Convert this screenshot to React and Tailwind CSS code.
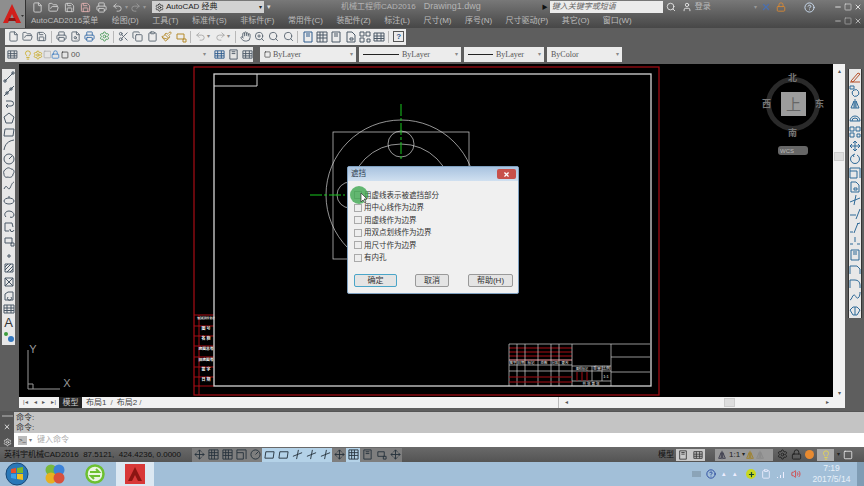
import { Copy, Clipboard, File, FileSearch, FolderOpen, Hand, HelpCircle, Minus, Paintbrush, Printer, Redo2, Save, Scissors, Search, Settings, Square, Undo2, User, X, ZoomIn, Lock, Lightbulb, Volume2, Plus } from 'lucide-react'

// 12x12 strokes for the AutoCAD tools that the icon pack has no match for
const paths = {
  line: 'M2 10L10 2M1 9h2v2H1zM9 1h2v2H9z',
  xline: 'M1 11L11 1M3 7h2v2H3zM7 3h2v2H7z',
  pline: 'M3 3h5a2 2 0 0 1 0 5H3M3 8l2-2M3 8l2 2',
  polygon: 'M6 1l5 4-2 6H3L1 5z',
  rect: 'M2 3h9l-1 7H1z',
  arc: 'M1 11C2 5 5 2 11 1',
  circle: 'M6 1a5 5 0 1 0 0 10A5 5 0 1 0 6 1zM6 6l3-3',
  cloud: 'M3 2c2-2 4-1 5 0 3 0 4 3 2 5 0 3-3 4-5 3-3 1-4-1-4-3-1-2 0-4 2-5z',
  spline: 'M1 9c3-7 4 3 6-1s2-5 4-6',
  ellipse: 'M1 7a5 3 0 1 0 10 0a5 3 0 1 0-10 0M6 2v2',
  earc: 'M3 9C0 6 3 3 6 3s5 2 5 4-3 3-4 2',
  block: 'M2 2h7l1 4M2 2v8h4M7 8a2 2 0 1 0 4 1M9 11l-2-2',
  insert: 'M2 3h7v5H2zM8 8h3v3H8z',
  point: 'M5 6h2v2H5z',
  hatch: 'M2 2h8v8H2zM2 5l3-3M2 8l6-6M4 10l6-6M7 10l3-3',
  grad: 'M2 2h8v8H2zM2 2l8 8M10 2l-8 8',
  region: 'M2 4l3-2h5v8H2zM5 7a2 2 0 1 0 3 0',
  table: 'M1 2h10v8H1zM1 5h10M1 7.5h10M4 2v8M8 2v8',
  pencil: 'M2 10L9 2l2 1-7 8zM1 11h10',
  copyobj: 'M1 1h4v3H1zM5 5a3 3 0 1 0 3 6 3 3 0 0 0-3-6z',
  mirror: 'M6 1v10M5 3L2 10h3zM7 3l3 7H7z',
  offset: 'M1 9a5 5 0 0 1 10 0zM3 9a3 3 0 0 1 6 0',
  array: 'M1 1h4v4H1zM7 1h4v4H7zM1 7h4v4H1zM8 8h3v3H8z',
  move: 'M6 1v10M1 6h10M6 1L4 3M6 1l2 2M6 11L4 9M6 11l2-2M1 6l2-2M1 6l2 2M11 6L9 4M11 6L9 8',
  rotate: 'M8 2a4.5 4.5 0 1 1-4 0M4 2l2-1M4 2l1 2',
  scale: 'M1 4h7v7H1zM1 1h10v10M1 1v3',
  stretch: 'M2 1h5l3 3v7H2zM5 7h3v2H5z',
  trim: 'M1 8l10-4M7 1L5 11',
  extend: 'M1 7h6M7 11l4-10',
  brk: 'M1 10h3M8 2l3-1M5 11L9 1',
  chamfer: 'M1 3h7l3 3v5M1 3v8',
  fillet: 'M1 3h5c3 0 5 2 5 5v3M1 3v8',
  blend: 'M1 10c2 0 2-5 4-5s2 4 4 3 2-5 2-6',
  explode: 'M1 6l3-3h4l3 3-3 5H4zM6 3v8',
  break: 'M1 9h3M8 9h3M6 2v5',
  sheet: 'M2 1h8v10H2zM4 3h4M4 5h4',
  grid: 'M1 1h10v10H1zM1 4h10M1 7h10M4 1v10M7 1v10',
}

const Ico = ({ n, c = '#4a5866', s = 12 }) => (
  <svg width={s} height={s} viewBox="0 0 12 12" fill="none" stroke={c} strokeWidth="1">
    <path d={paths[n]} />
  </svg>
)

const menus = ['AutoCAD2016菜单', '绘图(D)', '工具(T)', '标准件(S)', '非标件(F)', '常用件(C)', '装配件(Z)', '标注(L)', '尺寸(M)', '序号(N)', '尺寸驱动(P)', '其它(O)', '窗口(W)']
const leftTools = ['line', 'xline', 'pline', 'polygon', 'rect', 'arc', 'circle', 'cloud', 'spline', 'ellipse', 'earc', 'block', 'insert', 'point', 'hatch', 'grad', 'region', 'table']
const rightTools = ['pencil', 'copyobj', 'mirror', 'offset', 'array', 'move', 'rotate', 'scale', 'stretch', 'trim', 'extend', 'brk', 'break', 'sheet', 'chamfer', 'fillet', 'blend', 'explode']
const options = ['用虚线表示被遮挡部分', '用中心线作为边界', '用虚线作为边界', '用双点划线作为边界', '用尺寸作为边界', '有内孔']
const sideLabels = [['借(通)用件登记', 319, 2.6], ['图 号', 330, 4], ['名 称', 340, 4], ['底图总号', 350, 3.8], ['旧底图号', 361, 3.8], ['签 字', 371, 4], ['日 期', 381, 4]]
const statusOn = [false, false, false, false, false, true, true, true, true, true, false, true, false, false, false]

function QuickIcons() {
  return (
    <div className="flex shrink-0 items-center gap-[5px] text-[#d0d0d0]">
      <File size={11} />
      <FolderOpen size={11} />
      <Save size={11} />
      <Save size={11} className="text-[#e0b0b0]" />
      <Printer size={11} />
      <div className="flex items-center gap-[2px] text-[#999]">
        <Undo2 size={11} className="text-[#ccc]" />
        <span className="text-[6px]">▾</span>
        <Redo2 size={11} />
        <span className="text-[6px]">▾</span>
      </div>
    </div>
  )
}

function WindowButtons() {
  return (
    <div className="flex items-center gap-[2px] text-[#ddd]">
      <Minus size={8} strokeWidth={3} />
      <Square size={8} strokeWidth={2} />
      <X size={8} strokeWidth={3} />
    </div>
  )
}

function TitleBar() {
  return (
    <div className="flex h-[28px] bg-gradient-to-b from-[#787878] to-[#474747]">
      <div className="flex h-[28px] w-[26px] shrink-0 items-center justify-center border-r border-[#333] bg-[#8e8e8e]">
        <svg width="22" height="22" viewBox="0 0 22 22">
          <path d="M10 1L1 20h5l4-9 4 9h5z" fill="#d2201c" />
          <path d="M7 15h6l1 3H6z" fill="#8c1512" />
          <path d="M19 12h3l-1.500 2z" fill="#333" />
        </svg>
      </div>
      <div className="flex min-w-0 flex-1 flex-col">
        <div className="flex h-[14px] items-center whitespace-nowrap pl-[6px]">
          <QuickIcons />
          <div className="ml-[6px] flex h-[12px] w-[112px] shrink-0 items-center bg-[#d2d2d2] pl-[3px] text-[8px] text-[#222]">
            <Settings size={9} className="mr-[2px]" />
            AutoCAD 经典
            <span className="ml-auto pr-[2px] text-[6px]">▾</span>
          </div>
          <span className="ml-[3px] text-[7px] text-[#ddd]">▾</span>
          <span className="ml-[70px] shrink-0 text-[8px] text-[#b4b4b4]">机械工程师CAD2016</span>
          <span className="ml-[8px] shrink-0 text-[9px] text-[#b4b4b4]">Drawing1.dwg</span>
          <span className="ml-[61px] text-[6px] text-[#111]">▶</span>
          <div className="ml-[2px] flex h-[12px] w-[113px] shrink-0 items-center bg-[#ececec] pl-[2px] text-[8px] italic text-[#666]">键入关键字或短语</div>
          <Search size={10} className="ml-[3px] shrink-0 text-[#eee]" />
          <User size={10} className="ml-[6px] shrink-0 text-[#eee]" />
          <span className="ml-[3px] shrink-0 text-[8px] text-[#bbb]">登录</span>
          <span className="ml-[43px] text-[6px] text-[#999]">▾</span>
          <X size={10} strokeWidth={3} className="ml-[4px] shrink-0 text-[#4a6fb0]" />
          <Lock size={10} className="ml-[5px] shrink-0 text-[#e08a30]" />
          <HelpCircle size={11} className="ml-[18px] shrink-0 text-[#cfe0f5]" />
          <div className="ml-auto pr-[2px]"><WindowButtons /></div>
        </div>
        <div className="flex h-[14px] items-center">
          <div className="ml-[5px] flex gap-[13.5px] whitespace-nowrap text-[8px] text-[#bdbdbd]">
            {menus.map((m) => <span key={m}>{m}</span>)}
          </div>
          <div className="ml-auto pr-[2px] opacity-70"><WindowButtons /></div>
        </div>
      </div>
    </div>
  )
}

function Sep() {
  return <div className="mx-[2px] h-[12px] w-px bg-[#b8b8b8]" />
}

function Cell({ children }) {
  return <div className="flex w-[15px] justify-center">{children}</div>
}

function StandardBar() {
  return (
    <div className="flex h-[17px] items-center bg-[#5e5e5e] pl-[5px]">
      <div className="flex h-[16px] w-[401px] items-center bg-[#ececec] pl-[1px] text-[#5a6672]">
        <Cell><File size={11} /></Cell>
        <Cell><FolderOpen size={11} /></Cell>
        <Cell><Save size={11} /></Cell>
        <Sep />
        <Cell><Printer size={11} /></Cell>
        <Cell><FileSearch size={11} /></Cell>
        <Cell><Printer size={11} className="text-[#3a6ea8]" /></Cell>
        <Cell><Settings size={11} className="text-[#4b9a5a]" /></Cell>
        <Sep />
        <Cell><Scissors size={11} /></Cell>
        <Cell><Copy size={11} /></Cell>
        <Cell><Clipboard size={11} /></Cell>
        <Cell><Paintbrush size={11} className="text-[#b58a2a]" /></Cell>
        <Cell><Ico n="insert" c="#b58a2a" /></Cell>
        <Sep />
        <Cell><Undo2 size={11} className="text-[#aaa]" /></Cell>
        <span className="w-[6px] text-[6px] text-[#888]">▾</span>
        <Cell><Redo2 size={11} className="text-[#aaa]" /></Cell>
        <span className="w-[6px] text-[6px] text-[#888]">▾</span>
        <Sep />
        <Cell><Hand size={11} /></Cell>
        <Cell><ZoomIn size={11} /></Cell>
        <Cell><Search size={11} /></Cell>
        <Cell><Search size={11} /></Cell>
        <Sep />
        <Cell><Ico n="sheet" c="#2c5a8c" /></Cell>
        <Cell><Ico n="grid" /></Cell>
        <Cell><Ico n="sheet" /></Cell>
        <Cell><Ico n="stretch" /></Cell>
        <Cell><Ico n="array" /></Cell>
        <Cell><Ico n="table" /></Cell>
        <Sep />
        <Cell><div className="flex h-[11px] w-[11px] items-center justify-center border border-[#555] text-[8px] font-bold leading-none text-[#2c5a8c]">?</div></Cell>
      </div>
    </div>
  )
}

function Combo({ w, children }) {
  return (
    <div className={`flex h-[15px] items-center bg-[#ececec] pl-[4px] font-['Liberation_Serif',serif] text-[8px] text-[#555] ${w}`}>
      {children}
      <span className="ml-auto pr-[3px] text-[6px] text-[#888]">▾</span>
    </div>
  )
}

function PropertyBar() {
  return (
    <div className="flex h-[19px] items-center bg-[#5e5e5e] pl-[5px]">
      <div className="flex h-[15px] w-[248px] items-center bg-[#e4e4e4] pl-[2px] text-[#555]">
        <Ico n="table" s={11} />
        <Lightbulb size={10} className="ml-[5px] text-[#c8a81c]" />
        <Settings size={10} className="text-[#c8a81c]" />
        <Square size={9} className="text-[#aaa]" />
        <Lock size={9} className="text-[#3478c0]" />
        <Square size={8} className="ml-[1px] text-[#222]" />
        <span className="ml-[2px] text-[8px]">00</span>
        <span className="ml-[123px] text-[6px] text-[#888]">▾</span>
        <div className="ml-[8px] flex gap-[3px]">
          <Ico n="table" c="#2c5a8c" s={11} />
          <Ico n="sheet" s={11} />
          <Ico n="table" s={11} />
        </div>
      </div>
      <div className="ml-[7px] flex gap-[3px]">
        <Combo w="w-[96px]"><Square size={7} className="mr-[2px] text-[#222]" />ByLayer</Combo>
        <Combo w="w-[102px]"><span className="mr-[3px] h-px w-[36px] bg-[#222]" />ByLayer</Combo>
        <Combo w="w-[80px]"><span className="mr-[3px] h-px w-[25px] bg-[#222]" />ByLayer</Combo>
        <Combo w="w-[75px]">ByColor</Combo>
      </div>
    </div>
  )
}

function Drawing() {
  const white = '#d4d4d4'
  const red = '#a80c14'
  const tbV = [517, 525, 538, 551, 559]
  const tbRed = [348, 352, 356, 360]
  return (
    <svg className="absolute inset-0" width="814" height="333" viewBox="19 64 814 333" fill="none">
      <rect x="194" y="67" width="465" height="328" stroke={red} strokeWidth="1.2" />
      <path d="M199 315V395M194 315H214M194 326H214M194 336H214M194 346H214M194 357H214M194 367H214M194 377H214M194 386H214" stroke={red} />
      <rect x="214" y="74" width="437" height="312" stroke={white} strokeWidth="1.3" />
      <path d="M214 86H257V74" stroke={white} />
      <rect x="333" y="132" width="136" height="127" stroke={white} strokeWidth="0.7" />
      <circle cx="401" cy="195" r="75" stroke={white} strokeWidth="0.7" />
      <circle cx="401" cy="195" r="51" stroke={white} strokeWidth="0.7" />
      <circle cx="401" cy="144" r="13" stroke={white} strokeWidth="0.7" />
      <circle cx="350" cy="195" r="13" stroke={white} strokeWidth="0.7" />
      <path d="M401 104V160M310 195H345" stroke="#19c81e" strokeDasharray="12 2 3 2" />
      {sideLabels.map(([t, y, size]) => (
        <text key={t} x="206" y={y} fontSize={size} fill="#f2f2f2" textAnchor="middle" fontWeight="700">{t}</text>
      ))}
      {/* title block */}
      {tbRed.map((y) => <path key={y} d={`M509 ${y}H572`} stroke={red} />)}
      <path d="M509 386V344H650M572 344V386M611 344V386M509 360H572M509 365H572M509 371H611M572 366H611M572 381H611M592 366V381M602 366V381M611 357H650M611 372H650" stroke={white} strokeWidth="0.7" />
      {tbV.map((x) => <path key={x} d={`M${x} 344V386`} stroke={white} strokeWidth="0.7" />)}
      <path d="M577 372V381M582 372V381M587 372V381M509 377H572M509 382H572" stroke={red} />
      {[['签字', 513], ['日期', 521], ['标记', 531], ['处数', 544], ['分区', 555], ['更改', 565]].map(([t, x]) => (
        <text key={x} x={x} y="364" fontSize="3.5" fill="#eee" textAnchor="middle">{t}</text>
      ))}
      <text x="582" y="370" fontSize="3" fill="#eee" textAnchor="middle">图样标记</text>
      <text x="597" y="370" fontSize="4" fill="#eee" textAnchor="middle">重量</text>
      <text x="606" y="370" fontSize="4" fill="#eee" textAnchor="middle">比例</text>
      <text x="606" y="378" fontSize="4" fill="#eee" textAnchor="middle">1:1</text>
      <text x="591" y="385" fontSize="3.5" fill="#eee" textAnchor="middle">共  张  第  张</text>
      {/* ucs icon */}
      <path d="M28 350V389H60M28 384H33V389" stroke="#9a9a9a" />
      <text x="33" y="353" fontSize="11" fill="#9a9a9a" textAnchor="middle" fontFamily="Liberation Sans">Y</text>
      <text x="67" y="387" fontSize="11" fill="#9a9a9a" textAnchor="middle" fontFamily="Liberation Sans">X</text>
    </svg>
  )
}

function ViewCube() {
  return (
    <div className="absolute left-[747px] top-[9px] h-[62px] w-[54px]">
      <div className="absolute inset-x-0 top-[4px] h-[54px] rounded-full border-[5px] border-[#2a2a2a]" />
      <div className="absolute left-[15px] top-[19px] flex h-[24px] w-[25px] items-center justify-center bg-[#9c9c9c] text-[15px] leading-none text-[#666]">上</div>
      <span className="absolute left-[22px] top-0 text-[9px] font-bold leading-[10px] text-[#777]">北</span>
      <span className="absolute bottom-[-3px] left-[22px] text-[9px] font-bold leading-[10px] text-[#777]">南</span>
      <span className="absolute left-[-4px] top-[26px] text-[9px] font-bold leading-[10px] text-[#777]">西</span>
      <span className="absolute left-[49px] top-[26px] text-[9px] font-bold leading-[10px] text-[#777]">东</span>
      <div className="absolute left-[12px] top-[73px] flex h-[9px] w-[30px] items-center rounded-[3px] bg-[#666] pl-[2px] text-[6px] leading-none text-[#bbb]">WCS</div>
    </div>
  )
}

function Dialog() {
  return (
    <div className="absolute left-[328px] top-[102px] flex h-[128px] w-[172px] flex-col rounded-[2px] border border-[#7fa0c0] bg-[#f0f0f0] text-[7.5px] text-[#333]">
      <div className="flex h-[14px] items-center bg-gradient-to-b from-[#a9c3e0] to-[#d0e0f0] pl-[3px] text-[#2c3c4c]">
        遮挡
        <div className="ml-auto mr-[2px] flex h-[10px] w-[19px] items-center justify-center rounded-[2px] bg-[#c8504a] text-white">
          <X size={7} strokeWidth={4} />
        </div>
      </div>
      <div className="flex flex-col pl-[6px] pt-[8px]">
        {options.map((o) => (
          <label key={o} className="flex h-[12.5px] items-center">
            <span className="h-[8px] w-[8px] border border-[#aaa] bg-[#eee]" />
            <span className="ml-[2px] leading-none">{o}</span>
          </label>
        ))}
      </div>
      <div className="mt-[10px] flex pl-[6px] text-[8px]">
        <button className="h-[13px] w-[43px] rounded-[2px] border border-[#4aa5c8] bg-[#e4e4e4] leading-none">确定</button>
        <button className="ml-[18px] h-[13px] w-[34px] rounded-[2px] border border-[#999] bg-[#e4e4e4] leading-none">取消</button>
        <button className="ml-[19px] h-[13px] w-[45px] rounded-[2px] border border-[#999] bg-[#e4e4e4] leading-none">帮助(H)</button>
      </div>
      <div className="absolute left-[2px] top-[19px] h-[18px] w-[18px] rounded-full bg-[#3fa850]/80" />
      <svg className="absolute left-[12px] top-[25px]" width="8" height="12" viewBox="0 0 8 12">
        <path d="M1 1v9l2-2 2 3 1-1-2-3h3z" fill="#fff" stroke="#333" strokeWidth="0.7" />
      </svg>
    </div>
  )
}

function Workspace() {
  return (
    <div className="flex min-h-0 flex-1 bg-[#5e5e5e]">
      <div className="ml-[2px] mr-[4px] w-[13px] pt-[5px]">
        <div className="flex h-[276px] flex-col items-center justify-between bg-[#e8e8e8] py-[2px]">
          {leftTools.map((t, i) => <Ico key={i} n={t} />)}
          <span className="font-['Liberation_Sans',sans-serif] text-[13px] leading-[12px] text-[#333]">A</span>
          <svg width="12" height="12" viewBox="0 0 12 12">
            <circle cx="3" cy="3" r="2" fill="#3c9c3c" />
            <circle cx="8" cy="8" r="3" fill="#3478c0" />
          </svg>
        </div>
      </div>
      <div className="flex min-w-0 flex-1 flex-col">
        <div className="flex min-h-0 flex-1">
          <div className="relative min-w-0 flex-1 bg-black">
            <Drawing />
            <ViewCube />
            <Dialog />
          </div>
          <div className="flex w-[12px] flex-col items-center bg-[#f2f2f2]">
            <span className="mt-[3px] text-[6px] leading-[8px] text-[#555]">▴</span>
            <div className="mt-[77px] h-[9px] w-[10px] border border-[#ccc] bg-[#ddd]" />
            <span className="mt-auto text-[6px] leading-[8px] text-[#555]">▾</span>
          </div>
        </div>
        <div className="flex h-[11px] items-center bg-[#f2f2f2] text-[8px] text-[#444]">
          <div className="flex w-[40px] justify-around pl-[1px] text-[6px] text-[#555]">
            <span>|◂</span><span>◂</span><span>▸</span><span>▸|</span>
          </div>
          <span className="flex h-[11px] w-[23px] items-center justify-center bg-[#222] text-[#ccc]">模型</span>
          <span className="ml-[4px]">布局1</span>
          <span className="mx-[4px] text-[#777]">/</span>
          <span>布局2</span>
          <span className="ml-[2px] text-[#777]">/</span>
          <div className="relative ml-auto flex h-[11px] w-[287px] items-center justify-between border-l border-[#bbb] px-[6px] text-[6px] text-[#555]">
            <span>◂</span>
            <span className="absolute left-[165px] h-[9px] w-[11px] border border-[#ccc] bg-[#ddd]" />
            <span className="mr-[10px]">▸</span>
          </div>
        </div>
      </div>
      <div className="ml-[3px] mr-[2px] w-[14px] pt-[5px]">
        <div className="flex h-[249px] flex-col items-center justify-between border-x border-[#333] bg-[#e8e8e8] py-[2px]">
          {rightTools.map((t, i) => <Ico key={i} n={t} c={i === 0 ? '#b5502a' : '#2f6a98'} />)}
        </div>
      </div>
    </div>
  )
}

function CommandArea() {
  return (
    <div className="mt-[3px] flex h-[36px] border-t border-[#555] bg-[#c4c4c4]">
      <div className="flex w-[14px] flex-col items-center bg-[#555] text-[#e8e8e8]">
        <div className="mt-[3px] h-[2px] w-[11px] bg-[#888]" />
        <X size={8} strokeWidth={3} className="mt-[6px]" />
        <Settings size={9} className="mt-[8px]" />
      </div>
      <div className="flex min-w-0 flex-1 flex-col">
        <div className="flex h-[22px] flex-col justify-center pl-[2px] text-[8px] leading-[10px] text-[#333]">
          <span>命令:</span>
          <span>命令:</span>
        </div>
        <div className="flex h-[14px] items-center bg-white pl-[4px] text-[8px] text-[#aaa]">
          <span className="flex h-[9px] w-[9px] items-center justify-center bg-[#bbb] text-[6px] leading-none text-[#333]">&gt;_</span>
          <span className="ml-[2px] text-[6px] text-[#777]">▾</span>
          <span className="ml-[5px]">键入命令</span>
        </div>
      </div>
    </div>
  )
}

function StatusBar() {
  return (
    <div className="flex h-[15px] items-center bg-gradient-to-b from-[#6a6a6a] to-[#545454] pl-[4px] text-[8px] text-[#111]">
      <span className="w-[188px] whitespace-nowrap">英科宇机械CAD2016 &nbsp;87.5121, &nbsp;424.4236, 0.0000</span>
      <div className="flex h-[14px] items-center bg-[#7e7e7e]">
        {statusOn.map((on, i) => (
          <div key={i} className={`flex h-[14px] w-[14px] items-center justify-center ${on ? 'bg-[#b4d2e8]' : ''}`}>
            <Ico n={['move', 'grid', 'grid', 'scale', 'circle', 'rect', 'rect', 'trim', 'trim', 'trim', 'move', 'grid', 'sheet', 'insert', 'move'][i]} c="#26323c" s={11} />
          </div>
        ))}
      </div>
      <span className="ml-[256px] text-[8px]">模型</span>
      <div className="ml-[2px] flex h-[12px] w-[29px] items-center justify-around bg-[#c8c8c8]">
        <Ico n="sheet" s={10} c="#333" /><Ico n="table" s={10} c="#333" />
      </div>
      <div className="ml-[10px] flex h-[12px] w-[58px] items-center bg-[#999] pl-[2px] text-[#222]">
        <Ico n="mirror" s={10} c="#334" />
        <span className="ml-[2px]">1:1</span>
        <span className="ml-[2px] text-[6px]">▾</span>
        <Ico n="mirror" s={10} c="#a08020" />
        <Ico n="mirror" s={10} c="#888" />
      </div>
      <div className="ml-[4px] flex h-[14px] items-center gap-[3px] text-[#222]">
        <Settings size={11} />
        <Lock size={11} />
        <span className="h-[9px] w-[9px] rounded-full bg-[#e88a30]" />
        <div className="flex h-[12px] w-[17px] items-center justify-center bg-[#aaa]"><Lightbulb size={10} className="text-[#e8d84a]" /></div>
        <span className="text-[6px]">▾</span>
        <Square size={10} className="text-[#e8e8e8]" />
      </div>
    </div>
  )
}

function Taskbar() {
  return (
    <div className="flex h-[24px] items-center bg-[#a2bfd8]">
      <svg className="ml-[5px]" width="24" height="24" viewBox="0 0 24 24">
        <circle cx="12" cy="12" r="11" fill="#2a78b8" stroke="#1a4a78" />
        <path d="M6 7l5-1v5H6z" fill="#e8502a" />
        <path d="M12 6l6-1v6h-6z" fill="#7cb82a" />
        <path d="M6 12h5v5l-5-1z" fill="#3aa0e8" />
        <path d="M12 12h6v6l-6-1z" fill="#f0c020" />
      </svg>
      <svg className="ml-[15px]" width="22" height="22" viewBox="0 0 22 22">
        <circle cx="7" cy="7" r="5.500" fill="#78b83c" />
        <circle cx="15" cy="7" r="5.500" fill="#3c82d8" />
        <circle cx="7" cy="15" r="5.500" fill="#e8b020" />
        <circle cx="15" cy="15" r="5.500" fill="#d8503c" />
      </svg>
      <svg className="ml-[19px]" width="20" height="20" viewBox="0 0 20 20" fill="none">
        <circle cx="10" cy="10" r="8.500" fill="#eaf6e0" stroke="#6cc030" strokeWidth="2.500" />
        <path d="M5 8h9l-3-3M15 12H6l3 3" stroke="#6cc030" strokeWidth="2" />
      </svg>
      <div className="ml-[11px] flex h-[24px] w-[38px] items-center justify-center bg-[#dce8f2]">
        <svg width="20" height="20" viewBox="0 0 20 20">
          <rect width="20" height="20" fill="#d83838" />
          <path d="M10 3L3 17h4l3-6 3 6h4z" fill="#8c1512" />
        </svg>
      </div>
      <div className="ml-auto flex items-center text-[#4a6a88]">
        <div className="h-[6px] w-[9px] bg-[#8ba4b8]" />
        <HelpCircle size={10} className="ml-[5px] text-[#1c3c98]" />
        <span className="ml-[6px] w-[5px] text-[7px] text-[#eef]">▴</span>
        <span className="ml-[6px] w-[5px] text-[7px] text-[#eef]">▴</span>
        <span className="ml-[8px] flex h-[10px] w-[10px] items-center justify-center rounded-full bg-[#c8d820] text-[#143]"><Plus size={7} strokeWidth={4} /></span>
        <Clipboard size={10} className="ml-[5px] text-[#eef]" />
        <svg className="ml-[5px]" width="10" height="10" viewBox="0 0 10 10" fill="#eef"><path d="M1 8h1v1H1zM4 6h1v3H4zM7 3h1v6H7z" /></svg>
        <Volume2 size={10} className="ml-[5px] text-[#d83838]" />
      </div>
      <div className="ml-[8px] flex w-[45px] flex-col items-center text-[8.5px] leading-[11px] text-[#e8f0f8]">
        <span>7:19</span>
        <span>2017/5/14</span>
      </div>
      <div className="ml-[3px] h-[24px] w-[7px] bg-[#7f9cb4]" />
    </div>
  )
}

export default function App() {
  return (
    <div className="flex h-[486px] w-[864px] flex-col overflow-hidden bg-[#5e5e5e] font-['Liberation_Sans','Noto_Sans_CJK_SC',sans-serif]">
      <TitleBar />
      <StandardBar />
      <PropertyBar />
      <Workspace />
      <CommandArea />
      <StatusBar />
      <Taskbar />
    </div>
  )
}
